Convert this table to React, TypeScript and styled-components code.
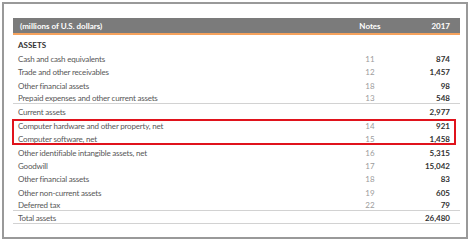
import React from "react";
import styled, { createGlobalStyle } from "styled-components";

const Global = createGlobalStyle`
  html, body { margin: 0; padding: 0; background: #ffffff; }
  body { font-family: Lato, "Open Sans", "Liberation Sans", sans-serif; }
`;

const Frame = styled.div`
  box-sizing: border-box;
  margin: 2px 0 0 2px;
  width: 466px;
  height: 237px;
  border: 2px solid #999999;
  padding: 14px 6px 0 9px;
  background: #fff;
`;

const Table = styled.div`
  display: flex;
  flex-direction: column;
`;

const cols = `1fr 40px 60px`;

const HeaderRow = styled.div`
  display: grid;
  grid-template-columns: ${cols};
  align-items: center;
  height: 15px;
  padding: 0 10px 0 7px;
  background: #7b7b7b;
  border-bottom: 2px solid #f5a25d;
  color: #fff;
  font-weight: 700;
  font-size: 8px;
`;

const HeadCell = styled.div<{ $align?: "left" | "center" | "right" }>`
  text-align: ${(p) => p.$align ?? "left"};
`;

const Body = styled.div`
  margin-top: 2px;
  display: flex;
  flex-direction: column;
`;

const Row = styled.div<{ $line?: boolean }>`
  box-sizing: border-box;
  display: grid;
  grid-template-columns: ${cols};
  align-items: end;
  height: 13.4px;
  padding: 0 10px 0 5px;
  line-height: 10px;
  font-size: 8px;
  border-bottom: ${(p) => (p.$line ? "1px solid #d2d2d2" : "none")};
`;

const Label = styled.div<{ $heading?: boolean }>`
  color: ${(p) => (p.$heading ? "#333" : "#585858")};
  font-weight: ${(p) => (p.$heading ? 700 : 400)};
  letter-spacing: ${(p) => (p.$heading ? "0" : "-0.2px")};
  white-space: nowrap;
`;

const Note = styled.div`
  text-align: center;
  color: #9c9c9c;
  font-weight: 400;
`;

const Value = styled.div`
  text-align: right;
  color: #333;
  font-weight: 700;
`;

const Highlight = styled.div`
  position: relative;
  display: flex;
  flex-direction: column;
  &::after {
    content: "";
    position: absolute;
    top: 2px;
    bottom: -1px;
    left: -1px;
    right: 4px;
    border: 2px solid #e0131c;
    pointer-events: none;
  }
`;

type Item = { label: string; note?: string; value?: string; line?: boolean; heading?: boolean };

const before: Item[] = [
  { label: "ASSETS", heading: true },
  { label: "Cash and cash equivalents", note: "11", value: "874" },
  { label: "Trade and other receivables", note: "12", value: "1,457" },
  { label: "Other financial assets", note: "18", value: "98" },
  { label: "Prepaid expenses and other current assets", note: "13", value: "548", line: true },
  { label: "Current assets", value: "2,977" },
];

const highlighted: Item[] = [
  { label: "Computer hardware and other property, net", note: "14", value: "921" },
  { label: "Computer software, net", note: "15", value: "1,458" },
];

const after: Item[] = [
  { label: "Other identifiable intangible assets, net", note: "16", value: "5,315" },
  { label: "Goodwill", note: "17", value: "15,042" },
  { label: "Other financial assets", note: "18", value: "83" },
  { label: "Other non-current assets", note: "19", value: "605" },
  { label: "Deferred tax", note: "22", value: "79", line: true },
  { label: "Total assets", value: "26,480", line: true },
];

const renderRow = (it: Item, i: number) => (
  <Row key={it.label + i} $line={it.line}>
    <Label $heading={it.heading}>{it.label}</Label>
    <Note>{it.note ?? ""}</Note>
    <Value>{it.value ?? ""}</Value>
  </Row>
);

export default function App() {
  return (
    <>
      <Global />
      <Frame>
        <Table>
          <HeaderRow>
            <HeadCell>(millions of U.S. dollars)</HeadCell>
            <HeadCell $align="center">Notes</HeadCell>
            <HeadCell $align="right">2017</HeadCell>
          </HeaderRow>
          <Body>
            {before.map(renderRow)}
            <Highlight>{highlighted.map(renderRow)}</Highlight>
            {after.map(renderRow)}
          </Body>
        </Table>
      </Frame>
    </>
  );
}
